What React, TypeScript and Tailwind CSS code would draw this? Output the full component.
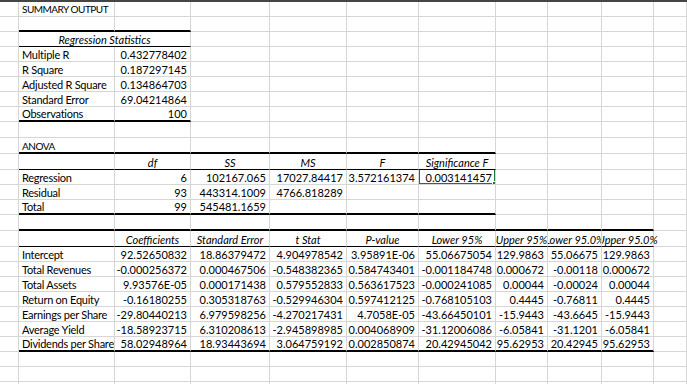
type Align = "l" | "r" | "c";
type Cell = { t?: string; a?: Align; i?: boolean; span?: boolean; clip?: "both" | "left" | "none"; sel?: boolean; caps?: boolean };
type Row = { h: 15 | 16; cells: Cell[]; b?: [number, number, "thick" | "thin"]; up?: boolean };

const E: Cell = {};
const L = (t: string): Cell => ({ t, a: "l" });
const R = (t: string): Cell => ({ t, a: "r" });
const H = (t: string, clip?: "both" | "left"): Cell => ({ t, a: "c", i: true, clip });

const coef = (label: string, vals: string[]): Cell[] => [E, L(label), ...vals.map(R)];

const ROWS: Row[] = [
  { h: 15, cells: [E, { t: "SUMMARY OUTPUT", a: "l", caps: true, clip: "none" }], up: true },
  { h: 15, cells: [], b: [1, 2, "thick"] },
  { h: 15, cells: [E, { t: "Regression Statistics", a: "c", i: true, span: true }], b: [1, 2, "thin"] },
  { h: 15, cells: [E, L("Multiple R"), R("0.432778402")] },
  { h: 15, cells: [E, L("R Square"), R("0.187297145")] },
  { h: 15, cells: [E, L("Adjusted R Square"), R("0.134864703")] },
  { h: 15, cells: [E, L("Standard Error"), R("69.04214864")] },
  { h: 15, cells: [E, L("Observations"), R("100")], b: [1, 2, "thick"] },
  { h: 16, cells: [] },
  { h: 16, cells: [E, { t: "ANOVA", a: "l", caps: true }], b: [1, 6, "thick"] },
  { h: 16, cells: [E, E, H("df"), H("SS"), H("MS"), H("F"), H("Significance F")], b: [1, 6, "thin"] },
  {
    h: 15,
    cells: [E, L("Regression"), R("6"), R("102167.065"), R("17027.84417"), R("3.572161374"), { t: "0.003141457", a: "r", sel: true }],
  },
  { h: 15, cells: [E, L("Residual"), R("93"), R("443314.1009"), R("4766.818289")] },
  { h: 15, cells: [E, L("Total"), R("99"), R("545481.1659")], b: [1, 6, "thick"] },
  { h: 16, cells: [], b: [1, 9, "thick"] },
  {
    h: 16,
    cells: [
      E, E, H("Coefficients"), H("Standard Error"), H("t Stat"), H("P-value"),
      H("Lower 95%"), H("Upper 95%"), H("Lower 95.0%", "both"), H("Upper 95.0%", "left"),
    ],
    b: [1, 9, "thin"],
  },
  { h: 15, cells: coef("Intercept", ["92.52650832", "18.86379472", "4.904978542", "3.95891E-06", "55.06675054", "129.9863", "55.06675", "129.9863"]) },
  { h: 15, cells: coef("Total Revenues", ["-0.000256372", "0.000467506", "-0.548382365", "0.584743401", "-0.001184748", "0.000672", "-0.00118", "0.000672"]) },
  { h: 15, cells: coef("Total Assets", ["9.93576E-05", "0.000171438", "0.579552833", "0.563617523", "-0.000241085", "0.00044", "-0.00024", "0.00044"]) },
  { h: 15, cells: coef("Return on Equity", ["-0.16180255", "0.305318763", "-0.529946304", "0.597412125", "-0.768105103", "0.4445", "-0.76811", "0.4445"]) },
  { h: 15, cells: coef("Earnings per Share", ["-29.80440213", "6.979598256", "-4.270217431", "4.7058E-05", "-43.66450101", "-15.9443", "-43.6645", "-15.9443"]) },
  { h: 15, cells: coef("Average Yield", ["-18.58923715", "6.310208613", "-2.945898985", "0.004068909", "-31.12006086", "-6.05841", "-31.1201", "-6.05841"]) },
  {
    h: 15,
    cells: coef("Dividends per Share", ["58.02948964", "18.93443694", "3.064759192", "0.002850874", "20.42945042", "95.62953", "20.42945", "95.62953"]),
    b: [1, 9, "thick"],
  },
  { h: 15, cells: [] },
  { h: 15, cells: [] },
  { h: 15, cells: [] },
];

const NCOLS = 11;

function SheetRow({ row }: { row: Row }) {
  const out: React.ReactElement[] = [];
  let col = 0;
  let idx = 0;
  while (col < NCOLS) {
    const c = row.cells[idx] ?? E;
    idx++;
    const span = c.span ? 2 : 1;
    const last = col + span - 1;
    let edge = "border-b-[#d6d6d6]";
    if (row.b && col >= row.b[0] && last <= row.b[1]) {
      edge = row.b[2] === "thick" ? "border-b-2 border-b-black" : "border-b-black";
    }
    const align = c.a === "r" ? "justify-end" : c.a === "c" ? "justify-center" : "justify-start";
    let clip = "overflow-hidden";
    if (c.clip === "left") clip = "[clip-path:inset(0_-60px_0_0)]";
    else if (c.clip === "none" || (c.a === "c" && c.clip !== "both")) clip = "";
    // caps text in Lato runs wider than the sheet's font, so squeeze it a bit
    const track = c.caps ? "text-[10px] tracking-[-0.5px]" : c.a === "l" ? "tracking-[-0.25px]" : "";
    out.push(
      <div
        key={col}
        className={`relative flex items-end px-[3px] whitespace-nowrap border-r border-b border-r-[#d6d6d6] ${
          row.up ? "pb-[2px]" : "pb-[1px]"
        } ${edge} ${align} ${clip} ${track} ${c.span ? "col-span-2" : ""} ${c.i ? "italic" : ""}`}
      >
        {c.t}
        {c.sel && (
          <>
            <div className="absolute -left-[1px] -top-[2px] -right-[1px] -bottom-[1px] border-2 border-[#217346]" />
            <div className="absolute -right-[4px] -bottom-[4px] w-[7px] h-[7px] bg-[#217346] border border-white" />
          </>
        )}
      </div>,
    );
    col += span;
  }
  return (
    <div
      className={`grid grid-cols-[19px_96px_76px_79px_77px_72px_77px_52px_54px_52px_1fr] ${
        row.h === 16 ? "h-[16px]" : "h-[15px]"
      }`}
    >
      {out}
    </div>
  );
}

export default function App() {
  return (
    <div className="w-[687px] h-[384px] overflow-hidden bg-white text-black font-['Lato',sans-serif] text-[11px] leading-none">
      <div className="h-[2px] bg-[#454545]" />
      {ROWS.map((r, i) => (
        <SheetRow key={i} row={r} />
      ))}
    </div>
  );
}
